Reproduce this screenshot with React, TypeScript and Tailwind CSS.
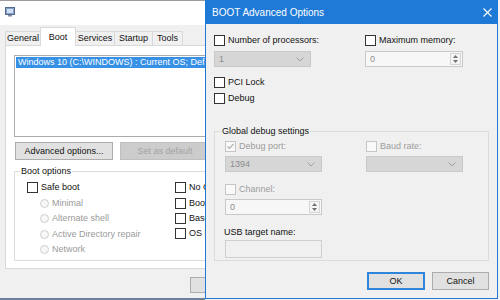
import React from 'react';

const Chevron = ({ color = '#a0a0a0' }: { color?: string }) => (
  <svg width="8" height="5" viewBox="0 0 8 5">
    <path d="M0.5 0.5L4 4L7.5 0.5" fill="none" stroke={color} strokeWidth="1" />
  </svg>
);

const Box = ({ checked, disabled }: { checked?: boolean; disabled?: boolean }) => (
  <span
    className={`flex h-[11px] w-[11px] shrink-0 items-center justify-center border ${
      disabled ? 'border-[#c6c6c6] bg-[#f9f9f9]' : 'border-[#333333] bg-white'
    }`}
  >
    {checked && (
      <svg width="9" height="9" viewBox="0 0 9 9">
        <path d="M1.5 4.5L3.5 6.5L7.5 2" fill="none" stroke={disabled ? '#b0b0b0' : '#222'} strokeWidth="1.2" />
      </svg>
    )}
  </span>
);

const Check = ({ label, checked, disabled }: { label: string; checked?: boolean; disabled?: boolean }) => (
  <div className={`flex h-[13px] items-center gap-[3px] whitespace-nowrap ${disabled ? 'text-[#9d9d9d]' : 'text-[#111]'}`}>
    <Box checked={checked} disabled={disabled} />
    <span>{label}</span>
  </div>
);

const Radio = ({ label }: { label: string }) => (
  <div className="flex h-[15.5px] items-center gap-[3px] whitespace-nowrap text-[#9a9a9a]">
    <span className="h-[9px] w-[9px] shrink-0 rounded-full border border-[#cfcfcf] bg-[#f7f7f7]" />
    <span>{label}</span>
  </div>
);

const Select = ({ value, width }: { value?: string; width: string }) => (
  <div className={`flex h-[16px] ${width} items-center justify-between border border-[#c9c9c9] bg-[#d6d6d6] pl-[4px] pr-[6px] text-[#8e8e8e]`}>
    <span>{value}</span>
    <Chevron />
  </div>
);

const Spin = ({ value, width }: { value: string; width: string }) => (
  <div className={`flex h-[16px] ${width} items-stretch border border-[#c9c9c9] bg-[#f7f7f7] text-[#8e8e8e]`}>
    <span className="flex flex-1 items-center pl-[4px]">{value}</span>
    <span className="my-[1px] mr-[1px] flex w-[11px] flex-col items-center justify-center gap-[2px] border border-[#d4d4d4] bg-[#f4f4f4]">
      <svg width="5" height="3" viewBox="0 0 5 3"><path d="M0 3L2.5 0L5 3Z" fill="#707070" /></svg>
      <svg width="5" height="3" viewBox="0 0 5 3"><path d="M0 0L2.5 3L5 0Z" fill="#707070" /></svg>
    </span>
  </div>
);

// System Configuration window, only its left part shows from under the dialog
const BootWindow = () => (
  <div className="h-full w-[205px] overflow-hidden">
    <div className="flex h-full w-[500px] flex-col">
      {/* title strip */}
      <div className="h-[25px] border-t border-[#9c9c9c] bg-white pl-[5px] pt-[6px]">
        <svg width="10" height="10" viewBox="0 0 10 10">
          <rect x="0.5" y="0.5" width="9" height="7" fill="#8aa0c8" stroke="#56698f" />
          <rect x="2" y="2" width="6" height="4" fill="#cfe0f7" />
          <rect x="3" y="8" width="4" height="1.5" fill="#7d8aa3" />
        </svg>
      </div>

      {/* tabs */}
      <div className="relative z-10 flex h-[20px] items-end pl-[5px]">
        <div className="flex h-[14px] w-[36px] items-center justify-center border border-b-0 border-[#d9d9d9] bg-[#f0f0f0]">General</div>
        <div className="-mb-px -ml-px flex h-[19px] w-[36px] items-start justify-center border border-b-0 border-[#d9d9d9] bg-white pt-[3px]">Boot</div>
        <div className="-ml-px flex h-[14px] w-[40px] items-center justify-center border border-b-0 border-[#d9d9d9] bg-[#f0f0f0]">Services</div>
        <div className="-ml-px flex h-[14px] w-[39px] items-center justify-center border border-b-0 border-[#d9d9d9] bg-[#f0f0f0]">Startup</div>
        <div className="-ml-px flex h-[14px] w-[31px] items-center justify-center border border-b-0 border-[#d9d9d9] bg-[#f0f0f0]">Tools</div>
      </div>

      {/* tab panel */}
      <div className="mx-[5px] h-[224px] border border-[#d9d9d9] bg-white px-[8px] pt-[9px]">
        <div className="h-[82px] border border-[#a9abb1] p-[1px]">
          <div className="h-[11px] whitespace-nowrap bg-[#3590e6] pl-[2px] leading-[11px] text-white">
            Windows 10 (C:\WINDOWS) : Current OS; Default OS
          </div>
        </div>

        <div className="mt-[5px] flex gap-[7px] pl-[1px]">
          <div className="flex h-[18px] w-[98px] items-center justify-center border border-[#adadad] bg-[#e1e1e1]">Advanced options...</div>
          <div className="flex h-[18px] w-[90px] items-center justify-center border border-[#bfbfbf] bg-[#cccccc] text-[#a3a3a3]">Set as default</div>
        </div>

        <fieldset className="mt-[6px] h-[95px] border border-[#dcdcdc] px-[5px]">
          <legend className="px-[1px] leading-[11px]">Boot options</legend>
          <div className="grid grid-cols-[148px_1fr] pl-[7px] pt-[3px]">
            <div>
              <div className="flex h-[15.5px] items-center">
                <Check label="Safe boot" />
              </div>
              <div className="pl-[13px]">
                <Radio label="Minimal" />
                <Radio label="Alternate shell" />
                <Radio label="Active Directory repair" />
                <Radio label="Network" />
              </div>
            </div>
            <div>
              <div className="flex h-[15.5px] items-center"><Check label="No GUI boot" /></div>
              <div className="flex h-[15.5px] items-center"><Check label="Boot log" /></div>
              <div className="flex h-[15px] items-center"><Check label="Base video" /></div>
              <div className="flex h-[15px] items-center"><Check label="OS boot information" /></div>
            </div>
          </div>
        </fieldset>
      </div>

      {/* footer */}
      <div className="flex-1 pl-[190px] pt-[8px]">
        <div className="h-[16px] w-[60px] border border-[#adadad] bg-[#e1e1e1]" />
      </div>
      <div className="h-[2px] bg-[#6d8099]" />
    </div>
  </div>
);

const AdvancedDialog = () => (
  <div className="absolute left-[205px] top-0 flex h-[299px] w-[293px] flex-col border border-t-0 border-[#1e7ad6] bg-[#f0f0f0]">
    <div className="-mx-px flex h-[24px] shrink-0 items-center justify-between bg-[#1e7ad6] pl-[7px] pr-[6px] text-[10px] text-white">
      <span>BOOT Advanced Options</span>
      <svg width="9" height="9" viewBox="0 0 9 9">
        <path d="M0.5 0.5L8.5 8.5M8.5 0.5L0.5 8.5" stroke="white" strokeWidth="1.1" />
      </svg>
    </div>

    <div className="flex flex-1 flex-col px-[8px] pt-[10px]">
      <div className="grid grid-cols-[151px_1fr]">
        <div className="flex flex-col gap-[4px]">
          <Check label="Number of processors:" />
          <Select value="1" width="w-[97px]" />
        </div>
        <div className="flex flex-col gap-[4px]">
          <Check label="Maximum memory:" />
          <Spin value="0" width="w-[98px]" />
        </div>
      </div>

      <div className="mt-[9px] flex flex-col gap-[3px]">
        <Check label="PCI Lock" />
        <Check label="Debug" />
      </div>

      <fieldset className="mt-[21px] h-[135px] border border-[#dcdcdc] px-[6px]">
        <legend className="px-[1px] leading-[11px]">Global debug settings</legend>
        <div className="grid grid-cols-[141px_1fr] pl-[4px] pt-[3px]">
          <div className="flex flex-col gap-[3px]">
            <Check label="Debug port:" checked disabled />
            <Select value="1394" width="w-[97px]" />
          </div>
          <div className="flex flex-col gap-[3px]">
            <Check label="Baud rate:" disabled />
            <Select width="w-[97px]" />
          </div>
        </div>
        <div className="mt-[11px] flex flex-col gap-[3px] pl-[4px]">
          <Check label="Channel:" disabled />
          <Spin value="0" width="w-[97px]" />
        </div>
        <div className="mt-[12px] pl-[3px] leading-[11px] text-[#111]">USB target name:</div>
        <div className="ml-[4px] mt-[2px] h-[18px] w-[97px] border border-[#cfcfcf] bg-[#f0f0f0]" />
      </fieldset>

      <div className="mt-[11px] flex justify-end gap-[7px]">
        <div className="flex h-[18px] w-[58px] items-center justify-center border-2 border-[#2d86dc] bg-[#e1e1e1]">OK</div>
        <div className="flex h-[18px] w-[57px] items-center justify-center border border-[#adadad] bg-[#e1e1e1]">Cancel</div>
      </div>
    </div>
  </div>
);

export default function App() {
  return (
    <div className="relative h-[300px] w-[500px] overflow-hidden bg-[#f0f0f0] font-['Liberation_Sans',Arial,sans-serif] text-[9px] leading-[13px] text-[#111]">
      <BootWindow />
      <AdvancedDialog />
    </div>
  );
}
